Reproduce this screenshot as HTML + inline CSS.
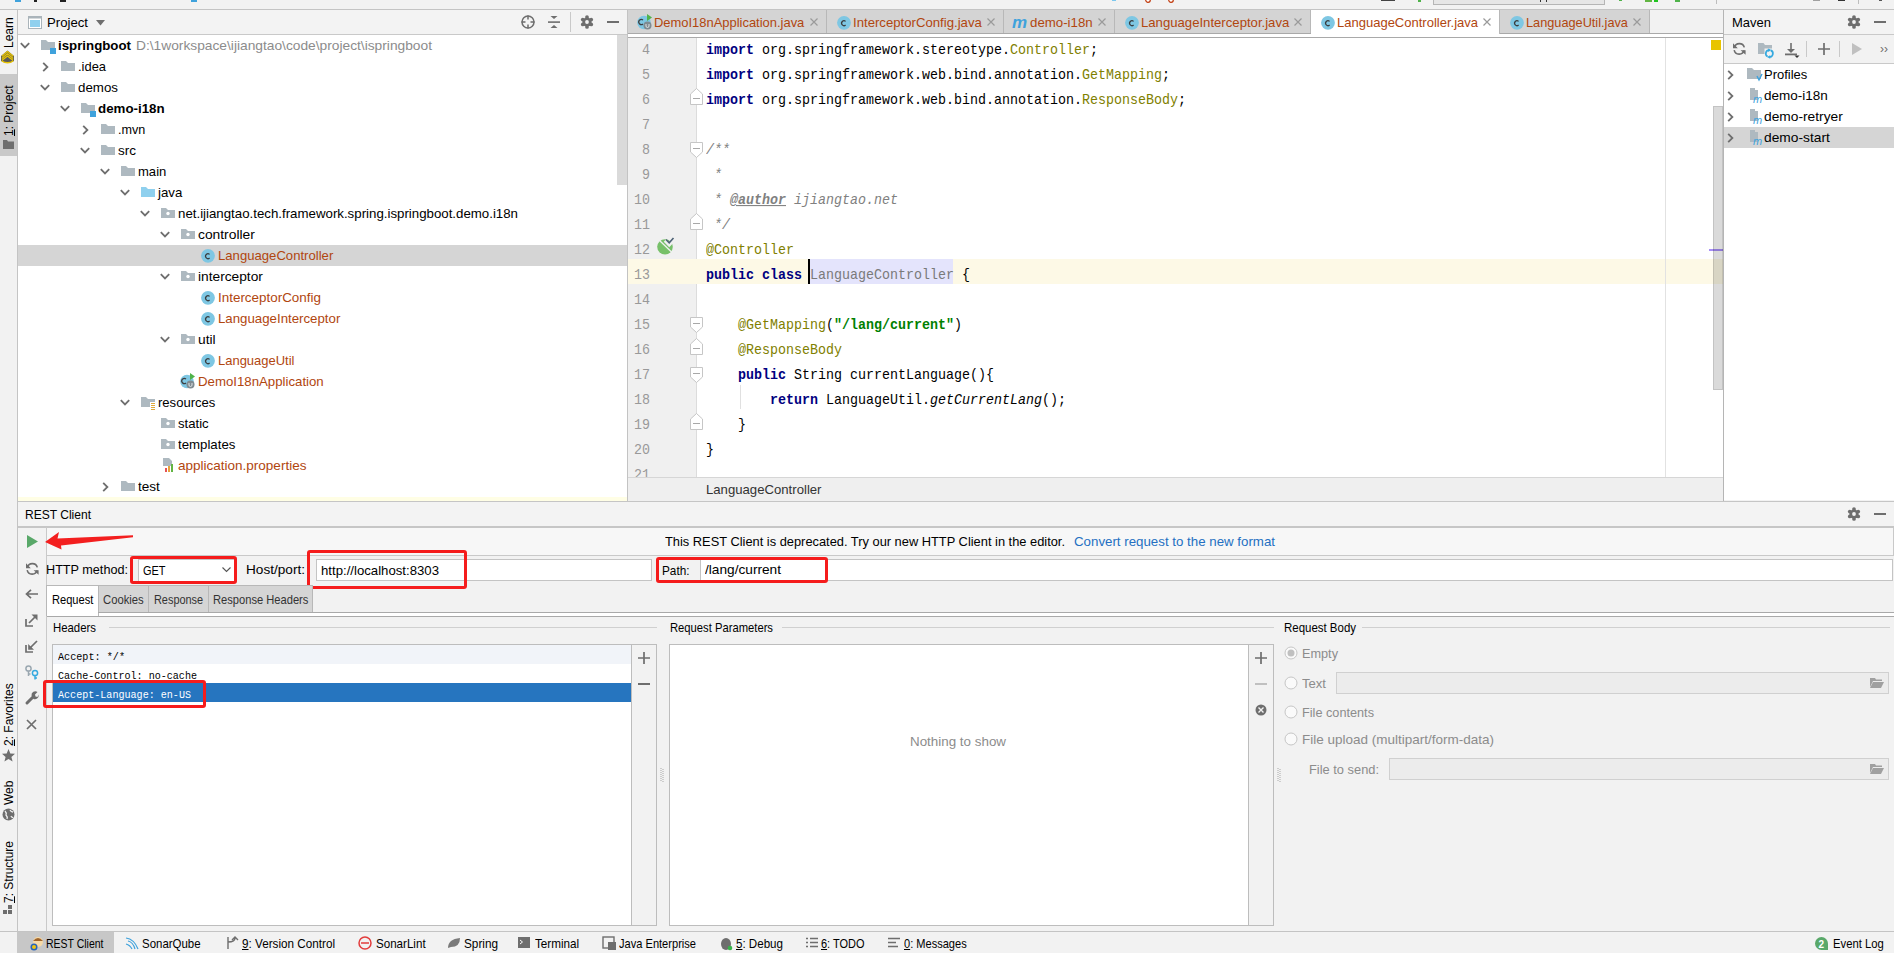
<!DOCTYPE html><html><head><meta charset="utf-8"><style>
html,body{margin:0;padding:0;}body{width:1894px;height:953px;overflow:hidden;position:relative;background:#f2f2f2;font-family:"Liberation Sans",sans-serif;font-size:13px;color:#000;}
div{box-sizing:border-box;}
svg{position:absolute;overflow:visible;pointer-events:none}
.t{position:absolute;white-space:pre;line-height:16px;}
.code{position:absolute;white-space:pre;font-family:"Liberation Mono",monospace;font-size:13.333px;line-height:16px;transform-origin:0 11.56px;transform:scaleY(1.08);}
.kw{color:#000080;font-weight:bold}.an{color:#808000}.st{color:#008000;font-weight:bold}.cm{color:#808080;font-style:italic}
.red{color:#b1460f}
.vt{position:absolute;white-space:pre;line-height:16px;transform-origin:0 0;transform:rotate(-90deg);}
</style></head><body>
<div style="position:absolute;left:0px;top:9px;width:1894px;height:1px;background:#c4c4c4"></div>
<div style="position:absolute;left:15px;top:0px;width:6px;height:2px;background:#3fa2dc"></div>
<div style="position:absolute;left:34px;top:0px;width:3px;height:2px;background:#222"></div>
<div style="position:absolute;left:60px;top:0px;width:6px;height:2px;background:#222"></div>
<div style="position:absolute;left:191px;top:0px;width:6px;height:2px;background:#3fa2dc"></div>
<div style="position:absolute;left:1112px;top:0px;width:4px;height:1px;background:#7cc8ee"></div>
<div style="position:absolute;left:1381px;top:0px;width:14px;height:1px;background:#444"></div>
<div style="position:absolute;left:1418px;top:0px;width:3px;height:2px;background:#4fb34a"></div>
<div style="position:absolute;left:1619px;top:0px;width:3px;height:1px;background:#4fb34a"></div>
<div style="position:absolute;left:1645px;top:0px;width:7px;height:2px;background:#62b543"></div>
<div style="position:absolute;left:1654px;top:0px;width:4px;height:2px;background:#1fc41f"></div>
<div style="position:absolute;left:1675px;top:0px;width:5px;height:2px;background:#4fb34a"></div>
<div style="position:absolute;left:1716px;top:0px;width:1px;height:4px;background:#bdbdbd"></div>
<div style="position:absolute;left:1813px;top:0px;width:7px;height:1px;background:#a0a0a0"></div>
<div style="position:absolute;left:1838px;top:0px;width:7px;height:1px;background:#333"></div>
<div style="position:absolute;left:1858px;top:0px;width:1px;height:4px;background:#bdbdbd"></div>
<div style="position:absolute;left:1879px;top:0px;width:3px;height:1px;background:#555"></div>
<svg style="left:1145px;top:-3px" width="6" height="6" viewBox="0 0 6 6"><circle cx="3" cy="3" r="2.3" fill="#fff" stroke="#c0390b" stroke-width="1.2"/></svg>
<svg style="left:1168px;top:-3px" width="6" height="6" viewBox="0 0 6 6"><circle cx="3" cy="3" r="2.3" fill="#fff" stroke="#c0390b" stroke-width="1.2"/></svg>
<div style="position:absolute;left:1433px;top:-1px;width:172px;height:6px;background:#e6e6e6;border:1px solid #b5b5b5"></div>
<div style="position:absolute;left:1540px;top:0px;width:1px;height:2px;background:#333"></div>
<div style="position:absolute;left:1546px;top:0px;width:1px;height:2px;background:#333"></div>
<div style="position:absolute;left:17px;top:10px;width:1px;height:921px;background:#c4c4c4"></div>
<div class="vt" style="left:1px;top:48px;font-size:12px;">Learn</div>
<svg style="left:1px;top:50px" width="13" height="14" viewBox="0 0 13 14"><path d="M0 6 L6.5 0.5 L13 6 V11 Q6.5 15 0 11 Z" fill="#5a5a5a"/><path d="M0.8 6.2 L6.5 1.5 L12.2 6.2 M0.8 8.4 L6.5 3.8 L12.2 8.4 M0.8 10.6 L6.5 6 L12.2 10.6" stroke="#e8c400" stroke-width="1.3" fill="none"/><path d="M0.8 11 Q6.5 14.5 12.2 11" stroke="#e8c400" stroke-width="1.3" fill="none"/></svg>
<div style="position:absolute;left:0px;top:74px;width:17px;height:82px;background:#c9c9c9"></div>
<div class="vt" style="left:1px;top:136px;font-size:12px;"><u>1</u>: Project</div>
<svg style="left:3px;top:139px" width="11" height="10" viewBox="0 0 11 10"><path d="M0 1 H4 L5 2.5 H11 V10 H0 Z" fill="#6e6e6e"/></svg>
<div class="vt" style="left:1px;top:746px;font-size:12px;"><u>2</u>: Favorites</div>
<svg style="left:2px;top:749px" width="13" height="13" viewBox="0 0 13 13"><path d="M6.5 0 L8.3 4.6 L13 4.8 L9.4 7.9 L10.6 12.6 L6.5 10 L2.4 12.6 L3.6 7.9 L0 4.8 L4.7 4.6 Z" fill="#6e6e6e"/></svg>
<div class="vt" style="left:1px;top:805px;font-size:12px;">Web</div>
<svg style="left:2px;top:808px" width="13" height="13" viewBox="0 0 13 13"><circle cx="6.5" cy="6.5" r="6" fill="#6e6e6e"/><path d="M3 3 Q5 5 4 7 Q6 9 5 11 M8 2 Q9 4 11 4 M9 8 Q10 10 11 9" stroke="#f2f2f2" stroke-width="1.3" fill="none"/></svg>
<div class="vt" style="left:1px;top:903px;font-size:12px;"><u>7</u>: Structure</div>
<svg style="left:3px;top:905px" width="10" height="10" viewBox="0 0 10 10"><rect x="5" y="0" width="4" height="4" fill="#6e6e6e"/><rect x="0" y="5" width="4" height="4" fill="#6e6e6e"/><rect x="5" y="5" width="4" height="4" fill="#6e6e6e"/></svg>
<div style="position:absolute;left:18px;top:10px;width:609px;height:24px;background:#f3f3f3"></div>
<div style="position:absolute;left:18px;top:34px;width:609px;height:1px;background:#c9c9c9"></div>
<svg style="left:28px;top:16px" width="14" height="13" viewBox="0 0 14 13"><rect x="0.5" y="0.5" width="13" height="12" fill="#fff" stroke="#aab4ba"/><rect x="0" y="0" width="14" height="2.5" fill="#aab4ba"/><rect x="2" y="4" width="10" height="7" fill="#8fd0ee"/></svg>
<div class="t" style="left:47px;top:15px;transform-origin:0 0;transform:scaleX(1.0131);">Project</div>
<svg style="left:96px;top:20px" width="9" height="6" viewBox="0 0 9 6"><path d="M0 0 H9 L4.5 5.5 Z" fill="#6e6e6e"/></svg>
<svg style="left:521px;top:15px" width="14" height="14" viewBox="0 0 14 14"><circle cx="7" cy="7" r="6" fill="none" stroke="#6e6e6e" stroke-width="1.5"/><path d="M7 0.5 V4.5 M7 9.5 V13.5 M0.5 7 H4.5 M9.5 7 H13.5" stroke="#6e6e6e" stroke-width="1.5"/></svg>
<svg style="left:548px;top:15px" width="12" height="14" viewBox="0 0 12 14"><path d="M2.5 1 H9.5 L6 4 Z M2.5 13 H9.5 L6 10 Z" fill="#6e6e6e"/><rect x="0" y="6.3" width="12" height="1.6" fill="#6e6e6e"/></svg>
<div style="position:absolute;left:570px;top:12px;width:1px;height:20px;background:#c9c9c9"></div>
<svg style="left:0;top:0" width="1894" height="953"><circle cx="587" cy="22" r="4.6" fill="#6e6e6e"/><circle cx="587.00" cy="17.10" r="1.85" fill="#6e6e6e"/><circle cx="591.24" cy="19.55" r="1.85" fill="#6e6e6e"/><circle cx="591.24" cy="24.45" r="1.85" fill="#6e6e6e"/><circle cx="587.00" cy="26.90" r="1.85" fill="#6e6e6e"/><circle cx="582.76" cy="24.45" r="1.85" fill="#6e6e6e"/><circle cx="582.76" cy="19.55" r="1.85" fill="#6e6e6e"/><circle cx="587" cy="22" r="1.9" fill="#f3f3f3"/></svg>
<div style="position:absolute;left:607px;top:21px;width:12px;height:2px;background:#6e6e6e"></div>
<div style="position:absolute;left:18px;top:35px;width:609px;height:465px;background:#fff"></div>
<div style="position:absolute;left:18px;top:245px;width:609px;height:21px;background:#d5d5d5"></div>
<div style="position:absolute;left:617px;top:35px;width:10px;height:150px;background:#dadada"></div>
<svg style="left:20px;top:42px" width="10" height="8" viewBox="0 0 10 8"><path d="M0.8 1.2 L5 5.4 L9.2 1.2" fill="none" stroke="#6e6e6e" stroke-width="1.8"/></svg>
<svg style="left:40px;top:37px" width="16" height="16" viewBox="0 0 16 16"><path d="M1 3 H6 L8 5 H15 V13 H1 Z" fill="#aeb9c0"/><rect x="10" y="11" width="6" height="6" fill="#3fa2dc"/></svg>
<div class="t" style="left:58px;top:38px;transform-origin:0 0;transform:scaleX(1.0210);"><b>ispringboot</b></div>
<svg style="left:42px;top:62px" width="8" height="10" viewBox="0 0 8 10"><path d="M1.2 0.8 L5.4 5 L1.2 9.2" fill="none" stroke="#6e6e6e" stroke-width="1.8"/></svg>
<svg style="left:60px;top:58px" width="16" height="16" viewBox="0 0 16 16"><path d="M1 3 H6 L8 5 H15 V13 H1 Z" fill="#aeb9c0"/></svg>
<div class="t" style="left:78px;top:59px;transform-origin:0 0;transform:scaleX(0.9928);">.idea</div>
<svg style="left:40px;top:84px" width="10" height="8" viewBox="0 0 10 8"><path d="M0.8 1.2 L5 5.4 L9.2 1.2" fill="none" stroke="#6e6e6e" stroke-width="1.8"/></svg>
<svg style="left:60px;top:79px" width="16" height="16" viewBox="0 0 16 16"><path d="M1 3 H6 L8 5 H15 V13 H1 Z" fill="#aeb9c0"/></svg>
<div class="t" style="left:78px;top:80px;transform-origin:0 0;transform:scaleX(1.0248);">demos</div>
<svg style="left:60px;top:105px" width="10" height="8" viewBox="0 0 10 8"><path d="M0.8 1.2 L5 5.4 L9.2 1.2" fill="none" stroke="#6e6e6e" stroke-width="1.8"/></svg>
<svg style="left:80px;top:100px" width="16" height="16" viewBox="0 0 16 16"><path d="M1 3 H6 L8 5 H15 V13 H1 Z" fill="#aeb9c0"/><rect x="10" y="11" width="6" height="6" fill="#3fa2dc"/></svg>
<div class="t" style="left:98px;top:101px;transform-origin:0 0;transform:scaleX(1.0244);"><b>demo-i18n</b></div>
<svg style="left:82px;top:125px" width="8" height="10" viewBox="0 0 8 10"><path d="M1.2 0.8 L5.4 5 L1.2 9.2" fill="none" stroke="#6e6e6e" stroke-width="1.8"/></svg>
<svg style="left:100px;top:121px" width="16" height="16" viewBox="0 0 16 16"><path d="M1 3 H6 L8 5 H15 V13 H1 Z" fill="#aeb9c0"/></svg>
<div class="t" style="left:118px;top:122px;transform-origin:0 0;transform:scaleX(0.9691);">.mvn</div>
<svg style="left:80px;top:147px" width="10" height="8" viewBox="0 0 10 8"><path d="M0.8 1.2 L5 5.4 L9.2 1.2" fill="none" stroke="#6e6e6e" stroke-width="1.8"/></svg>
<svg style="left:100px;top:142px" width="16" height="16" viewBox="0 0 16 16"><path d="M1 3 H6 L8 5 H15 V13 H1 Z" fill="#aeb9c0"/></svg>
<div class="t" style="left:118px;top:143px;transform-origin:0 0;transform:scaleX(1.0378);">src</div>
<svg style="left:100px;top:168px" width="10" height="8" viewBox="0 0 10 8"><path d="M0.8 1.2 L5 5.4 L9.2 1.2" fill="none" stroke="#6e6e6e" stroke-width="1.8"/></svg>
<svg style="left:120px;top:163px" width="16" height="16" viewBox="0 0 16 16"><path d="M1 3 H6 L8 5 H15 V13 H1 Z" fill="#aeb9c0"/></svg>
<div class="t" style="left:138px;top:164px;transform-origin:0 0;transform:scaleX(1.0040);">main</div>
<svg style="left:120px;top:189px" width="10" height="8" viewBox="0 0 10 8"><path d="M0.8 1.2 L5 5.4 L9.2 1.2" fill="none" stroke="#6e6e6e" stroke-width="1.8"/></svg>
<svg style="left:140px;top:184px" width="16" height="16" viewBox="0 0 16 16"><path d="M1 3 H6 L8 5 H15 V13 H1 Z" fill="#8fd0ee"/></svg>
<div class="t" style="left:158px;top:185px;transform-origin:0 0;transform:scaleX(1.0185);">java</div>
<svg style="left:140px;top:210px" width="10" height="8" viewBox="0 0 10 8"><path d="M0.8 1.2 L5 5.4 L9.2 1.2" fill="none" stroke="#6e6e6e" stroke-width="1.8"/></svg>
<svg style="left:160px;top:205px" width="16" height="16" viewBox="0 0 16 16"><path d="M1 3 H6 L8 5 H15 V13 H1 Z" fill="#aeb9c0"/><circle cx="8" cy="8.5" r="1.7" fill="#fff"/></svg>
<div class="t" style="left:178px;top:206px;transform-origin:0 0;transform:scaleX(1.0206);">net.ijiangtao.tech.framework.spring.ispringboot.demo.i18n</div>
<svg style="left:160px;top:231px" width="10" height="8" viewBox="0 0 10 8"><path d="M0.8 1.2 L5 5.4 L9.2 1.2" fill="none" stroke="#6e6e6e" stroke-width="1.8"/></svg>
<svg style="left:180px;top:226px" width="16" height="16" viewBox="0 0 16 16"><path d="M1 3 H6 L8 5 H15 V13 H1 Z" fill="#aeb9c0"/><circle cx="8" cy="8.5" r="1.7" fill="#fff"/></svg>
<div class="t" style="left:198px;top:227px;transform-origin:0 0;transform:scaleX(1.0623);">controller</div>
<svg style="left:200px;top:247px" width="16" height="16" viewBox="0 0 16 16"><circle cx="8" cy="8.8" r="6.9" fill="#7ec7e3"/><path d="M9.6 7.4 A2.4 2.4 0 1 0 9.6 11" fill="none" stroke="#3a3d3f" stroke-width="1.25"/></svg>
<div class="t" style="left:218px;top:248px;transform-origin:0 0;transform:scaleX(1.0096);"><span class="red">LanguageController</span></div>
<svg style="left:160px;top:273px" width="10" height="8" viewBox="0 0 10 8"><path d="M0.8 1.2 L5 5.4 L9.2 1.2" fill="none" stroke="#6e6e6e" stroke-width="1.8"/></svg>
<svg style="left:180px;top:268px" width="16" height="16" viewBox="0 0 16 16"><path d="M1 3 H6 L8 5 H15 V13 H1 Z" fill="#aeb9c0"/><circle cx="8" cy="8.5" r="1.7" fill="#fff"/></svg>
<div class="t" style="left:198px;top:269px;transform-origin:0 0;transform:scaleX(1.0566);">interceptor</div>
<svg style="left:200px;top:289px" width="16" height="16" viewBox="0 0 16 16"><circle cx="8" cy="8.8" r="6.9" fill="#7ec7e3"/><path d="M9.6 7.4 A2.4 2.4 0 1 0 9.6 11" fill="none" stroke="#3a3d3f" stroke-width="1.25"/></svg>
<div class="t" style="left:218px;top:290px;transform-origin:0 0;transform:scaleX(1.0327);"><span class="red">InterceptorConfig</span></div>
<svg style="left:200px;top:310px" width="16" height="16" viewBox="0 0 16 16"><circle cx="8" cy="8.8" r="6.9" fill="#7ec7e3"/><path d="M9.6 7.4 A2.4 2.4 0 1 0 9.6 11" fill="none" stroke="#3a3d3f" stroke-width="1.25"/></svg>
<div class="t" style="left:218px;top:311px;transform-origin:0 0;transform:scaleX(1.0193);"><span class="red">LanguageInterceptor</span></div>
<svg style="left:160px;top:336px" width="10" height="8" viewBox="0 0 10 8"><path d="M0.8 1.2 L5 5.4 L9.2 1.2" fill="none" stroke="#6e6e6e" stroke-width="1.8"/></svg>
<svg style="left:180px;top:331px" width="16" height="16" viewBox="0 0 16 16"><path d="M1 3 H6 L8 5 H15 V13 H1 Z" fill="#aeb9c0"/><circle cx="8" cy="8.5" r="1.7" fill="#fff"/></svg>
<div class="t" style="left:198px;top:332px;transform-origin:0 0;transform:scaleX(1.0586);">util</div>
<svg style="left:200px;top:352px" width="16" height="16" viewBox="0 0 16 16"><circle cx="8" cy="8.8" r="6.9" fill="#7ec7e3"/><path d="M9.6 7.4 A2.4 2.4 0 1 0 9.6 11" fill="none" stroke="#3a3d3f" stroke-width="1.25"/></svg>
<div class="t" style="left:218px;top:353px;transform-origin:0 0;transform:scaleX(0.9971);"><span class="red">LanguageUtil</span></div>
<svg style="left:180px;top:373px" width="16" height="16" viewBox="0 0 16 16"><circle cx="7" cy="8.5" r="6.8" fill="#7ec7e3"/><path d="M6 6 A2.6 2.6 0 1 0 6 10" fill="none" stroke="#3c3f41" stroke-width="1.2"/><path d="M10 0 L15 3.5 L10 7 Z" fill="#4fb34a"/><circle cx="10.5" cy="11.5" r="4" fill="#7f8b91"/><path d="M9 10 V12 A1.5 1.5 0 0 0 12 12 V10" fill="none" stroke="#dfe3e5" stroke-width="1"/></svg>
<div class="t" style="left:198px;top:374px;transform-origin:0 0;transform:scaleX(1.0172);"><span class="red">DemoI18nApplication</span></div>
<svg style="left:120px;top:399px" width="10" height="8" viewBox="0 0 10 8"><path d="M0.8 1.2 L5 5.4 L9.2 1.2" fill="none" stroke="#6e6e6e" stroke-width="1.8"/></svg>
<svg style="left:140px;top:394px" width="16" height="16" viewBox="0 0 16 16"><path d="M1 3 H6 L8 5 H15 V13 H1 Z" fill="#aeb9c0"/><rect x="10" y="8" width="6" height="8" fill="#fff"/><path d="M11 9.5H15M11 11.5H15M11 13.5H15M11 15.5H15" stroke="#e0a93a" stroke-width="1"/></svg>
<div class="t" style="left:158px;top:395px;transform-origin:0 0;transform:scaleX(1.0056);">resources</div>
<svg style="left:160px;top:415px" width="16" height="16" viewBox="0 0 16 16"><path d="M1 3 H6 L8 5 H15 V13 H1 Z" fill="#aeb9c0"/><circle cx="8" cy="8.5" r="1.7" fill="#fff"/></svg>
<div class="t" style="left:178px;top:416px;transform-origin:0 0;transform:scaleX(1.0117);">static</div>
<svg style="left:160px;top:436px" width="16" height="16" viewBox="0 0 16 16"><path d="M1 3 H6 L8 5 H15 V13 H1 Z" fill="#aeb9c0"/><circle cx="8" cy="8.5" r="1.7" fill="#fff"/></svg>
<div class="t" style="left:178px;top:437px;transform-origin:0 0;transform:scaleX(1.0182);">templates</div>
<svg style="left:160px;top:457px" width="16" height="16" viewBox="0 0 16 16"><path d="M3 1 H9 L12 4 V9 H3 Z" fill="#aeb9c0"/><rect x="8" y="9" width="2" height="6" fill="#e8a33d"/><rect x="11" y="7" width="2" height="8" fill="#62b543"/><rect x="5" y="11" width="2" height="4" fill="#e55353"/></svg>
<div class="t" style="left:178px;top:458px;transform-origin:0 0;transform:scaleX(1.0390);"><span class="red">application.properties</span></div>
<svg style="left:102px;top:482px" width="8" height="10" viewBox="0 0 8 10"><path d="M1.2 0.8 L5.4 5 L1.2 9.2" fill="none" stroke="#6e6e6e" stroke-width="1.8"/></svg>
<svg style="left:120px;top:478px" width="16" height="16" viewBox="0 0 16 16"><path d="M1 3 H6 L8 5 H15 V13 H1 Z" fill="#aeb9c0"/></svg>
<div class="t" style="left:138px;top:479px;transform-origin:0 0;transform:scaleX(1.0444);">test</div>
<div class="t" style="left:136px;top:38px;transform-origin:0 0;transform:scaleX(1.0584);color:#8c8c8c">D:\1workspace\ijiangtao\code\project\ispringboot</div>
<div style="position:absolute;left:628px;top:10px;width:1095px;height:24px;background:#f2f2f2"></div>
<div style="position:absolute;left:628px;top:10px;width:199px;height:24px;background:#d4d4d4;border-right:1px solid #b8b8b8"></div>
<svg style="left:637px;top:14px" width="16" height="16" viewBox="0 0 16 16"><circle cx="7" cy="8.5" r="6.8" fill="#7ec7e3"/><path d="M6 6 A2.6 2.6 0 1 0 6 10" fill="none" stroke="#3c3f41" stroke-width="1.2"/><path d="M10 0 L15 3.5 L10 7 Z" fill="#4fb34a"/><circle cx="10.5" cy="11.5" r="4" fill="#7f8b91"/><path d="M9 10 V12 A1.5 1.5 0 0 0 12 12 V10" fill="none" stroke="#dfe3e5" stroke-width="1"/></svg>
<div class="t" style="left:654px;top:15px;transform-origin:0 0;transform:scaleX(0.9951);color:#b1460f">DemoI18nApplication.java</div>
<svg style="left:810px;top:18px" width="8" height="8" viewBox="0 0 8 8"><path d="M0.5 0.5 L7.5 7.5 M7.5 0.5 L0.5 7.5" stroke="#9a9a9a" stroke-width="1.2"/></svg>
<div style="position:absolute;left:827px;top:10px;width:177px;height:24px;background:#d4d4d4;border-right:1px solid #b8b8b8"></div>
<svg style="left:836px;top:14px" width="16" height="16" viewBox="0 0 16 16"><circle cx="8" cy="8.8" r="6.9" fill="#7ec7e3"/><path d="M9.6 7.4 A2.4 2.4 0 1 0 9.6 11" fill="none" stroke="#3a3d3f" stroke-width="1.25"/></svg>
<div class="t" style="left:853px;top:15px;transform-origin:0 0;transform:scaleX(1.0127);color:#b1460f">InterceptorConfig.java</div>
<svg style="left:987px;top:18px" width="8" height="8" viewBox="0 0 8 8"><path d="M0.5 0.5 L7.5 7.5 M7.5 0.5 L0.5 7.5" stroke="#9a9a9a" stroke-width="1.2"/></svg>
<div style="position:absolute;left:1004px;top:10px;width:111px;height:24px;background:#d4d4d4;border-right:1px solid #b8b8b8"></div>
<div class="t" style="left:1012px;top:15px;"><i style="font-size:17px;color:#3fa2dc;font-weight:bold">m</i></div>
<div class="t" style="left:1030px;top:15px;transform-origin:0 0;transform:scaleX(1.0205);color:#b1460f">demo-i18n</div>
<svg style="left:1098px;top:18px" width="8" height="8" viewBox="0 0 8 8"><path d="M0.5 0.5 L7.5 7.5 M7.5 0.5 L0.5 7.5" stroke="#9a9a9a" stroke-width="1.2"/></svg>
<div style="position:absolute;left:1115px;top:10px;width:196px;height:24px;background:#d4d4d4;border-right:1px solid #b8b8b8"></div>
<svg style="left:1124px;top:14px" width="16" height="16" viewBox="0 0 16 16"><circle cx="8" cy="8.8" r="6.9" fill="#7ec7e3"/><path d="M9.6 7.4 A2.4 2.4 0 1 0 9.6 11" fill="none" stroke="#3a3d3f" stroke-width="1.25"/></svg>
<div class="t" style="left:1141px;top:15px;transform-origin:0 0;transform:scaleX(1.0107);color:#b1460f">LanguageInterceptor.java</div>
<svg style="left:1294px;top:18px" width="8" height="8" viewBox="0 0 8 8"><path d="M0.5 0.5 L7.5 7.5 M7.5 0.5 L0.5 7.5" stroke="#9a9a9a" stroke-width="1.2"/></svg>
<div style="position:absolute;left:1311px;top:10px;width:189px;height:24px;background:#fff;border-right:1px solid #b8b8b8"></div>
<svg style="left:1320px;top:14px" width="16" height="16" viewBox="0 0 16 16"><circle cx="8" cy="8.8" r="6.9" fill="#7ec7e3"/><path d="M9.6 7.4 A2.4 2.4 0 1 0 9.6 11" fill="none" stroke="#3a3d3f" stroke-width="1.25"/></svg>
<div class="t" style="left:1337px;top:15px;transform-origin:0 0;transform:scaleX(1.0004);color:#b1460f">LanguageController.java</div>
<svg style="left:1483px;top:18px" width="8" height="8" viewBox="0 0 8 8"><path d="M0.5 0.5 L7.5 7.5 M7.5 0.5 L0.5 7.5" stroke="#9a9a9a" stroke-width="1.2"/></svg>
<div style="position:absolute;left:1500px;top:10px;width:150px;height:24px;background:#d4d4d4;border-right:1px solid #b8b8b8"></div>
<svg style="left:1509px;top:14px" width="16" height="16" viewBox="0 0 16 16"><circle cx="8" cy="8.8" r="6.9" fill="#7ec7e3"/><path d="M9.6 7.4 A2.4 2.4 0 1 0 9.6 11" fill="none" stroke="#3a3d3f" stroke-width="1.25"/></svg>
<div class="t" style="left:1526px;top:15px;transform-origin:0 0;transform:scaleX(0.9791);color:#b1460f">LanguageUtil.java</div>
<svg style="left:1633px;top:18px" width="8" height="8" viewBox="0 0 8 8"><path d="M0.5 0.5 L7.5 7.5 M7.5 0.5 L0.5 7.5" stroke="#9a9a9a" stroke-width="1.2"/></svg>
<div style="position:absolute;left:628px;top:33px;width:683px;height:1px;background:#a9a9a9"></div>
<div style="position:absolute;left:1500px;top:33px;width:223px;height:1px;background:#a9a9a9"></div>
<div style="position:absolute;left:628px;top:34px;width:1095px;height:3px;background:#fff"></div>
<div style="position:absolute;left:628px;top:37px;width:1095px;height:1px;background:#a9a9a9"></div>
<div style="position:absolute;left:628px;top:38px;width:1095px;height:440px;background:#fff"></div>
<div style="position:absolute;left:628px;top:38px;width:68px;height:440px;background:#f0f0f0"></div>
<div style="position:absolute;left:696px;top:38px;width:1px;height:440px;background:#dcdcdc"></div>
<div style="position:absolute;left:628px;top:259px;width:1095px;height:25px;background:#fdf9e6"></div>
<div style="position:absolute;left:810px;top:259px;width:143px;height:25px;background:#e4e4fc"></div>
<div style="position:absolute;left:808px;top:259px;width:2px;height:25px;background:#000"></div>
<div style="position:absolute;left:1665px;top:38px;width:1px;height:440px;background:#e2e2e2"></div>
<div style="position:absolute;left:1711px;top:40px;width:10px;height:10px;background:#e8c400"></div>
<div style="position:absolute;left:1709px;top:249px;width:14px;height:2px;background:#a78ef7"></div>
<div style="position:absolute;left:1713px;top:106px;width:10px;height:284px;background:rgba(0,0,0,0.145);border:1px solid rgba(0,0,0,0.1)"></div>
<div class="code" style="left:628px;top:43px;width:22px;text-align:right;color:#999">4</div>
<div class="code" style="left:706px;top:43px;"><span class="kw">import</span> org.springframework.stereotype.<span class="an">Controller</span>;</div>
<div class="code" style="left:628px;top:68px;width:22px;text-align:right;color:#999">5</div>
<div class="code" style="left:706px;top:68px;"><span class="kw">import</span> org.springframework.web.bind.annotation.<span class="an">GetMapping</span>;</div>
<div class="code" style="left:628px;top:93px;width:22px;text-align:right;color:#999">6</div>
<div class="code" style="left:706px;top:93px;"><span class="kw">import</span> org.springframework.web.bind.annotation.<span class="an">ResponseBody</span>;</div>
<div class="code" style="left:628px;top:118px;width:22px;text-align:right;color:#999">7</div>
<div class="code" style="left:628px;top:143px;width:22px;text-align:right;color:#999">8</div>
<div class="code" style="left:706px;top:143px;"><span class="cm">/**</span></div>
<div class="code" style="left:628px;top:168px;width:22px;text-align:right;color:#999">9</div>
<div class="code" style="left:706px;top:168px;"><span class="cm"> *</span></div>
<div class="code" style="left:628px;top:193px;width:22px;text-align:right;color:#999">10</div>
<div class="code" style="left:706px;top:193px;"><span class="cm"> * <b style="text-decoration:underline">@author</b> ijiangtao.net</span></div>
<div class="code" style="left:628px;top:218px;width:22px;text-align:right;color:#999">11</div>
<div class="code" style="left:706px;top:218px;"><span class="cm"> */</span></div>
<div class="code" style="left:628px;top:243px;width:22px;text-align:right;color:#999">12</div>
<div class="code" style="left:706px;top:243px;"><span class="an">@Controller</span></div>
<div class="code" style="left:628px;top:268px;width:22px;text-align:right;color:#999">13</div>
<div class="code" style="left:706px;top:268px;"><span class="kw">public class</span> <span style="color:#7a7a7a">LanguageController</span> {</div>
<div class="code" style="left:628px;top:293px;width:22px;text-align:right;color:#999">14</div>
<div class="code" style="left:628px;top:318px;width:22px;text-align:right;color:#999">15</div>
<div class="code" style="left:706px;top:318px;">    <span class="an">@GetMapping</span>(<span class="st">"/lang/current"</span>)</div>
<div class="code" style="left:628px;top:343px;width:22px;text-align:right;color:#999">16</div>
<div class="code" style="left:706px;top:343px;">    <span class="an">@ResponseBody</span></div>
<div class="code" style="left:628px;top:368px;width:22px;text-align:right;color:#999">17</div>
<div class="code" style="left:706px;top:368px;">    <span class="kw">public</span> String currentLanguage(){</div>
<div class="code" style="left:628px;top:393px;width:22px;text-align:right;color:#999">18</div>
<div class="code" style="left:706px;top:393px;">        <span class="kw">return</span> LanguageUtil.<i>getCurrentLang</i>();</div>
<div class="code" style="left:628px;top:418px;width:22px;text-align:right;color:#999">19</div>
<div class="code" style="left:706px;top:418px;">    }</div>
<div class="code" style="left:628px;top:443px;width:22px;text-align:right;color:#999">20</div>
<div class="code" style="left:706px;top:443px;">}</div>
<div class="code" style="left:628px;top:468px;width:22px;text-align:right;color:#999">21</div>
<svg style="left:690px;top:88px" width="13" height="17" viewBox="0 0 13 17"><path d="M0.5 16.5 H12.5 V6 L6.5 0.5 L0.5 6 Z" fill="#fff" stroke="#c6c6c6"/><path d="M3 10.5 H10" stroke="#a8a8a8"/></svg>
<svg style="left:690px;top:141px" width="13" height="17" viewBox="0 0 13 17"><path d="M0.5 1.5 H12.5 V11 L6.5 16.5 L0.5 11 Z" fill="#fff" stroke="#c6c6c6"/><path d="M3 7.5 H10" stroke="#a8a8a8"/></svg>
<svg style="left:690px;top:213px" width="13" height="17" viewBox="0 0 13 17"><path d="M0.5 16.5 H12.5 V6 L6.5 0.5 L0.5 6 Z" fill="#fff" stroke="#c6c6c6"/><path d="M3 10.5 H10" stroke="#a8a8a8"/></svg>
<svg style="left:690px;top:316px" width="13" height="17" viewBox="0 0 13 17"><path d="M0.5 1.5 H12.5 V11 L6.5 16.5 L0.5 11 Z" fill="#fff" stroke="#c6c6c6"/><path d="M3 7.5 H10" stroke="#a8a8a8"/></svg>
<svg style="left:690px;top:338px" width="13" height="17" viewBox="0 0 13 17"><path d="M0.5 16.5 H12.5 V6 L6.5 0.5 L0.5 6 Z" fill="#fff" stroke="#c6c6c6"/><path d="M3 10.5 H10" stroke="#a8a8a8"/></svg>
<svg style="left:690px;top:366px" width="13" height="17" viewBox="0 0 13 17"><path d="M0.5 1.5 H12.5 V11 L6.5 16.5 L0.5 11 Z" fill="#fff" stroke="#c6c6c6"/><path d="M3 7.5 H10" stroke="#a8a8a8"/></svg>
<svg style="left:690px;top:413px" width="13" height="17" viewBox="0 0 13 17"><path d="M0.5 16.5 H12.5 V6 L6.5 0.5 L0.5 6 Z" fill="#fff" stroke="#c6c6c6"/><path d="M3 10.5 H10" stroke="#a8a8a8"/></svg>
<div style="position:absolute;left:740px;top:385px;width:1px;height:24px;background:#e0e0e0"></div>
<svg style="left:657px;top:237px" width="19" height="18" viewBox="0 0 19 18"><ellipse cx="8" cy="9.8" rx="7.8" ry="7.6" fill="#77c069"/><path d="M1.5 2.5 L14.5 15" stroke="#f0f0f0" stroke-width="1.3"/><path d="M8 3.5 L12.2 7.6 L17.5 2" stroke="#f0f0f0" stroke-width="3.6" fill="none"/><path d="M9 2.5 L12.2 5.8 L16.5 1" stroke="#4d6275" stroke-width="1.6" fill="none"/></svg>
<div style="position:absolute;left:628px;top:477px;width:1095px;height:24px;background:#efefef;border-top:1px solid #d6d6d6"></div>
<div class="t" style="left:706px;top:482px;transform-origin:0 0;transform:scaleX(1.0114);color:#333">LanguageController</div>
<div style="position:absolute;left:1723px;top:10px;width:1px;height:491px;background:#b5b5b5"></div>
<div style="position:absolute;left:627px;top:10px;width:1px;height:491px;background:#c3c3c3"></div>
<div style="position:absolute;left:1724px;top:10px;width:170px;height:24px;background:#f3f3f3"></div>
<div class="t" style="left:1732px;top:15px;transform-origin:0 0;transform:scaleX(0.9992);">Maven</div>
<svg style="left:0;top:0" width="1894" height="953"><circle cx="1854" cy="22" r="4.6" fill="#6e6e6e"/><circle cx="1854.00" cy="17.10" r="1.85" fill="#6e6e6e"/><circle cx="1858.24" cy="19.55" r="1.85" fill="#6e6e6e"/><circle cx="1858.24" cy="24.45" r="1.85" fill="#6e6e6e"/><circle cx="1854.00" cy="26.90" r="1.85" fill="#6e6e6e"/><circle cx="1849.76" cy="24.45" r="1.85" fill="#6e6e6e"/><circle cx="1849.76" cy="19.55" r="1.85" fill="#6e6e6e"/><circle cx="1854" cy="22" r="1.9" fill="#f3f3f3"/></svg>
<div style="position:absolute;left:1874px;top:21px;width:12px;height:2px;background:#6e6e6e"></div>
<div style="position:absolute;left:1724px;top:34px;width:170px;height:1px;background:#c9c9c9"></div>
<div style="position:absolute;left:1724px;top:35px;width:170px;height:28px;background:#f2f2f2"></div>
<div style="position:absolute;left:1724px;top:63px;width:170px;height:1px;background:#c9c9c9"></div>
<svg style="left:1733px;top:42px" width="13" height="13" viewBox="0 0 13 13"><path d="M1.4 5.6 A5.1 5.1 0 0 1 11.3 5.4 M11.1 8.4 A5.1 5.1 0 0 1 1.2 8.1" fill="none" stroke="#6e6e6e" stroke-width="1.6"/><path d="M0 1.2 V6.3 H4.8 Z M7.6 8.2 H12.6 V12.8 Z" fill="#6e6e6e"/></svg>
<svg style="left:1758px;top:43px" width="16" height="16" viewBox="0 0 16 16"><path d="M0 0 H5.5 L7 2 H14 V11 H0 Z" fill="#aeb9c0"/><path d="M6.5 5.5 H16 V16 H6.5 Z" fill="#f2f2f2"/><path d="M11.2 7.2 A3.4 3.4 0 0 0 9.6 13.6 M11 13.9 A3.4 3.4 0 0 0 12.8 7.4" stroke="#36a9df" stroke-width="1.7" fill="none"/><path d="M10.2 5.4 L13.4 7.1 L10.2 8.9 Z M12.2 12.2 L9 13.9 L12.2 15.7 Z" fill="#36a9df"/></svg>
<svg style="left:1785px;top:43px" width="15" height="16" viewBox="0 0 15 16"><path d="M6 0 V8" stroke="#6e6e6e" stroke-width="1.6"/><path d="M2 6 H10 L6 10 Z" fill="#6e6e6e"/><rect x="0" y="10.5" width="12" height="1.8" fill="#6e6e6e"/><path d="M9.5 12.5 H14.5 L12 15 Z" fill="#333"/></svg>
<div style="position:absolute;left:1806px;top:41px;width:1px;height:16px;background:#c9c9c9"></div>
<svg style="left:1818px;top:43px" width="12" height="12" viewBox="0 0 12 12"><path d="M6 0 V12 M0 6 H12" stroke="#6e6e6e" stroke-width="1.7"/></svg>
<div style="position:absolute;left:1839px;top:41px;width:1px;height:16px;background:#c9c9c9"></div>
<svg style="left:1852px;top:43px" width="10" height="12" viewBox="0 0 10 12"><path d="M0 0 L10 6 L0 12 Z" fill="#c0c0c0"/></svg>
<div class="t" style="left:1880px;top:41px;color:#6e6e6e;font-size:12px">››</div>
<div style="position:absolute;left:1724px;top:64px;width:170px;height:436px;background:#fff"></div>
<div style="position:absolute;left:1724px;top:127px;width:170px;height:21px;background:#d5d5d5"></div>
<svg style="left:1727px;top:70px" width="8" height="10" viewBox="0 0 8 10"><path d="M1.2 0.8 L5.4 5 L1.2 9.2" fill="none" stroke="#6e6e6e" stroke-width="1.8"/></svg>
<svg style="left:1747px;top:66px" width="16" height="16" viewBox="0 0 16 16"><path d="M0 2 H5 L7 4 H14 V13 H0 Z" fill="#aeb9c0"/><path d="M10 10 L12 14 L15 8" stroke="#3fa2dc" stroke-width="1.4" fill="none"/></svg>
<div class="t" style="left:1764px;top:67px;transform-origin:0 0;transform:scaleX(0.9986);">Profiles</div>
<svg style="left:1727px;top:91px" width="8" height="10" viewBox="0 0 8 10"><path d="M1.2 0.8 L5.4 5 L1.2 9.2" fill="none" stroke="#6e6e6e" stroke-width="1.8"/></svg>
<svg style="left:1748px;top:87px" width="16" height="16" viewBox="0 0 16 16"><path d="M2 1 H7 V3 H10 V13 H2 Z" fill="#aeb9c0"/><text x="5" y="16" font-size="11" font-style="italic" fill="#3fa2dc" font-family="Liberation Sans">m</text></svg>
<div class="t" style="left:1764px;top:88px;transform-origin:0 0;transform:scaleX(1.0385);">demo-i18n</div>
<svg style="left:1727px;top:112px" width="8" height="10" viewBox="0 0 8 10"><path d="M1.2 0.8 L5.4 5 L1.2 9.2" fill="none" stroke="#6e6e6e" stroke-width="1.8"/></svg>
<svg style="left:1748px;top:108px" width="16" height="16" viewBox="0 0 16 16"><path d="M2 1 H7 V3 H10 V13 H2 Z" fill="#aeb9c0"/><text x="5" y="16" font-size="11" font-style="italic" fill="#3fa2dc" font-family="Liberation Sans">m</text></svg>
<div class="t" style="left:1764px;top:109px;transform-origin:0 0;transform:scaleX(1.0588);">demo-retryer</div>
<svg style="left:1727px;top:133px" width="8" height="10" viewBox="0 0 8 10"><path d="M1.2 0.8 L5.4 5 L1.2 9.2" fill="none" stroke="#6e6e6e" stroke-width="1.8"/></svg>
<svg style="left:1748px;top:129px" width="16" height="16" viewBox="0 0 16 16"><path d="M2 1 H7 V3 H10 V13 H2 Z" fill="#aeb9c0"/><text x="5" y="16" font-size="11" font-style="italic" fill="#3fa2dc" font-family="Liberation Sans">m</text></svg>
<div class="t" style="left:1764px;top:130px;transform-origin:0 0;transform:scaleX(1.0589);">demo-start</div>
<div style="position:absolute;left:18px;top:497px;width:609px;height:4px;background:#fffee5"></div>
<div style="position:absolute;left:18px;top:501px;width:1876px;height:1px;background:#c5c5c5"></div>
<div style="position:absolute;left:18px;top:502px;width:1876px;height:24px;background:#f3f3f3"></div>
<div class="t" style="left:25px;top:507px;transform-origin:0 0;transform:scaleX(0.9257);">REST Client</div>
<svg style="left:0;top:0" width="1894" height="953"><circle cx="1854" cy="514" r="4.6" fill="#6e6e6e"/><circle cx="1854.00" cy="509.10" r="1.85" fill="#6e6e6e"/><circle cx="1858.24" cy="511.55" r="1.85" fill="#6e6e6e"/><circle cx="1858.24" cy="516.45" r="1.85" fill="#6e6e6e"/><circle cx="1854.00" cy="518.90" r="1.85" fill="#6e6e6e"/><circle cx="1849.76" cy="516.45" r="1.85" fill="#6e6e6e"/><circle cx="1849.76" cy="511.55" r="1.85" fill="#6e6e6e"/><circle cx="1854" cy="514" r="1.9" fill="#f3f3f3"/></svg>
<div style="position:absolute;left:1874px;top:513px;width:12px;height:2px;background:#6e6e6e"></div>
<div style="position:absolute;left:18px;top:526px;width:1876px;height:2px;background:#c6c6c6"></div>
<div style="position:absolute;left:46px;top:527px;width:1px;height:404px;background:#c9c9c9"></div>
<div style="position:absolute;left:46px;top:528px;width:1848px;height:28px;background:#f7f7f7;border:1px solid #c9c9c9;border-top:none"></div>
<div class="t" style="left:665px;top:534px;transform-origin:0 0;transform:scaleX(0.9880);">This REST Client is deprecated. Try our new HTTP Client in the editor.</div>
<div class="t" style="left:1074px;top:534px;transform-origin:0 0;transform:scaleX(1.0227);color:#2470c2">Convert request to the new format</div>
<svg style="left:27px;top:535px" width="11" height="13" viewBox="0 0 11 13"><path d="M0 0 L11 6.5 L0 13 Z" fill="#59a869"/></svg>
<svg style="left:26px;top:562px" width="13" height="13" viewBox="0 0 13 13"><path d="M1.4 5.6 A5.1 5.1 0 0 1 11.3 5.4 M11.1 8.4 A5.1 5.1 0 0 1 1.2 8.1" fill="none" stroke="#6e6e6e" stroke-width="1.6"/><path d="M0 1.2 V6.3 H4.8 Z M7.6 8.2 H12.6 V12.8 Z" fill="#6e6e6e"/></svg>
<svg style="left:25px;top:589px" width="13" height="10" viewBox="0 0 13 10"><path d="M1.5 5 H13 M6 0.8 L1.5 5 L6 9.2" fill="none" stroke="#6e6e6e" stroke-width="1.7"/></svg>
<svg style="left:25px;top:614px" width="13" height="13" viewBox="0 0 13 13"><path d="M1 5 V12 H8" fill="none" stroke="#6e6e6e" stroke-width="1.7"/><path d="M4 9 L11.5 1.5" stroke="#6e6e6e" stroke-width="1.7"/><path d="M6.5 0.5 H12.5 V6.5 Z" fill="#6e6e6e"/></svg>
<svg style="left:25px;top:640px" width="13" height="13" viewBox="0 0 13 13"><path d="M1 5 V12 H8" fill="none" stroke="#6e6e6e" stroke-width="1.7"/><path d="M4.5 8.5 L12 1" stroke="#6e6e6e" stroke-width="1.7"/><path d="M3.2 4 V9.8 H9 Z" fill="#6e6e6e"/></svg>
<svg style="left:25px;top:665px" width="14" height="15" viewBox="0 0 14 15"><circle cx="3.5" cy="3.5" r="2.6" fill="none" stroke="#9aa7b0" stroke-width="1.5"/><path d="M3.5 6 V11 M3.5 9 H5.5" stroke="#9aa7b0" stroke-width="1.5"/><circle cx="10" cy="8" r="2.6" fill="none" stroke="#36a9df" stroke-width="1.5"/><path d="M10 10.5 V14.5 M10 13 H12" stroke="#36a9df" stroke-width="1.5"/></svg>
<svg style="left:25px;top:691px" width="14" height="14" viewBox="0 0 14 14"><path d="M2 12 L8 6" stroke="#6e6e6e" stroke-width="3" stroke-linecap="round"/><path d="M6.5 4.5 A3.8 3.8 0 0 1 12.5 1 L10 3.5 L10.5 5.5 L12.5 6 L13.5 3.5 A3.8 3.8 0 0 1 8.5 8 Z" fill="#6e6e6e"/></svg>
<svg style="left:26px;top:719px" width="11" height="11" viewBox="0 0 11 11"><path d="M1 1 L10 10 M10 1 L1 10" stroke="#6e6e6e" stroke-width="1.7"/></svg>
<svg style="left:0px;top:0px" width="200" height="600" viewBox="0 0 200 600"><path d="M45 542 L59 532 L57.5 538.5 L133 535.3 L133 537.2 L61 545.5 L61.5 549.5 Z" fill="#f31f1f"/></svg>
<div class="t" style="left:46px;top:562px;transform-origin:0 0;transform:scaleX(0.9728);">HTTP method:</div>
<div style="position:absolute;left:138px;top:559px;width:97px;height:23px;background:#fff;border:1px solid #c4c4c4"></div>
<div class="t" style="left:143px;top:563px;transform-origin:0 0;transform:scaleX(0.8416);">GET</div>
<svg style="left:222px;top:567px" width="9" height="6" viewBox="0 0 9 6"><path d="M0.5 0.5 L4.5 4.5 L8.5 0.5" stroke="#555" stroke-width="1.1" fill="none"/></svg>
<div class="t" style="left:246px;top:562px;transform-origin:0 0;transform:scaleX(1.0469);">Host/port:</div>
<div style="position:absolute;left:316px;top:559px;width:336px;height:22px;background:#fff;border:1px solid #c4c4c4"></div>
<div class="t" style="left:321px;top:563px;transform-origin:0 0;transform:scaleX(1.0141);">http://localhost:8303</div>
<div style="position:absolute;left:657px;top:559px;width:1236px;height:22px;background:#fff;border:1px solid #c4c4c4"></div>
<div style="position:absolute;left:658px;top:560px;width:43px;height:20px;background:#f2f2f2;border-right:1px solid #c4c4c4"></div>
<div class="t" style="left:662px;top:563px;transform-origin:0 0;transform:scaleX(0.9058);">Path:</div>
<div class="t" style="left:705px;top:562px;transform-origin:0 0;transform:scaleX(1.0517);">/lang/current</div>
<div style="position:absolute;left:130px;top:556px;width:107px;height:28px;border:3px solid #f51c1c;border-radius:3px"></div>
<div style="position:absolute;left:307px;top:550px;width:160px;height:39px;border:3px solid #f51c1c;border-radius:3px"></div>
<div style="position:absolute;left:656px;top:557px;width:172px;height:26px;border:3px solid #f51c1c;border-radius:3px"></div>
<div style="position:absolute;left:47px;top:612px;width:1847px;height:4px;background:#fff"></div>
<div style="position:absolute;left:46px;top:585px;width:53px;height:31px;background:#fff;border:1px solid #b8b8b8;border-bottom:none"></div>
<div class="t" style="left:51.5px;top:592px;transform-origin:0 0;transform:scaleX(0.8529);color:#000">Request</div>
<div style="position:absolute;left:98px;top:585px;width:51px;height:28px;background:#d5d5d5;border:1px solid #b8b8b8"></div>
<div class="t" style="left:103.3px;top:592px;transform-origin:0 0;transform:scaleX(0.8665);color:#333">Cookies</div>
<div style="position:absolute;left:148px;top:585px;width:61px;height:28px;background:#d5d5d5;border:1px solid #b8b8b8"></div>
<div class="t" style="left:153.5px;top:592px;transform-origin:0 0;transform:scaleX(0.8386);color:#333">Response</div>
<div style="position:absolute;left:208px;top:585px;width:105px;height:28px;background:#d5d5d5;border:1px solid #b8b8b8"></div>
<div class="t" style="left:212.5px;top:592px;transform-origin:0 0;transform:scaleX(0.8572);color:#333">Response Headers</div>
<div style="position:absolute;left:47px;top:616px;width:1847px;height:1px;background:#a9a9a9"></div>
<div style="position:absolute;left:98px;top:612px;width:1796px;height:1px;background:#a9a9a9"></div>
<div class="t" style="left:53px;top:620px;transform-origin:0 0;transform:scaleX(0.8750);">Headers</div>
<div style="position:absolute;left:109px;top:627px;width:548px;height:1px;background:#d0d0d0"></div>
<div style="position:absolute;left:52px;top:644px;width:605px;height:282px;background:#fff;border:1px solid #bdbdbd"></div>
<div style="position:absolute;left:53px;top:645px;width:578px;height:19px;background:#f1f4f9"></div>
<div style="position:absolute;left:53px;top:683px;width:578px;height:19px;background:#2675bf"></div>
<div style="position:absolute;left:631px;top:645px;width:1px;height:280px;background:#bdbdbd"></div>
<div style="position:absolute;left:632px;top:645px;width:24px;height:280px;background:#f2f2f2"></div>
<div class="t" style="left:58px;top:649px;transform-origin:0 0;transform:scaleX(0.9225);font-family:'Liberation Mono',monospace;font-size:11px;">Accept: */*</div>
<div class="t" style="left:58px;top:668px;transform-origin:0 0;transform:scaleX(0.9155);font-family:'Liberation Mono',monospace;font-size:11px;">Cache-Control: no-cache</div>
<div class="t" style="left:58px;top:687px;transform-origin:0 0;transform:scaleX(0.9158);font-family:'Liberation Mono',monospace;font-size:11px;color:#fff">Accept-Language: en-US</div>
<svg style="left:638px;top:652px" width="12" height="12" viewBox="0 0 12 12"><path d="M6 0 V12 M0 6 H12" stroke="#6e6e6e" stroke-width="1.7"/></svg>
<div style="position:absolute;left:638px;top:683px;width:12px;height:2px;background:#6e6e6e"></div>
<div style="position:absolute;left:43px;top:680px;width:163px;height:28px;border:3px solid #f51c1c;border-radius:3px"></div>
<svg style="left:660px;top:768px" width="4" height="14" viewBox="0 0 4 14"><path d="M1 0 V14" stroke="#a8a8a8" stroke-dasharray="1 1"/><path d="M3 1 V14" stroke="#a8a8a8" stroke-dasharray="1 1"/></svg>
<div class="t" style="left:670px;top:620px;transform-origin:0 0;transform:scaleX(0.8638);">Request Parameters</div>
<div style="position:absolute;left:782px;top:627px;width:492px;height:1px;background:#d0d0d0"></div>
<div style="position:absolute;left:669px;top:644px;width:605px;height:282px;background:#fff;border:1px solid #bdbdbd"></div>
<div style="position:absolute;left:1248px;top:645px;width:1px;height:280px;background:#bdbdbd"></div>
<div style="position:absolute;left:1249px;top:645px;width:24px;height:280px;background:#f2f2f2"></div>
<div class="t" style="left:910px;top:734px;transform-origin:0 0;transform:scaleX(1.0297);color:#8c8c8c">Nothing to show</div>
<svg style="left:1255px;top:652px" width="12" height="12" viewBox="0 0 12 12"><path d="M6 0 V12 M0 6 H12" stroke="#6e6e6e" stroke-width="1.7"/></svg>
<div style="position:absolute;left:1255px;top:683px;width:12px;height:2px;background:#c0c0c0"></div>
<svg style="left:1255px;top:704px" width="12" height="12" viewBox="0 0 12 12"><circle cx="6" cy="6" r="5.5" fill="#6e6e6e"/><path d="M3.5 3.5 L8.5 8.5 M8.5 3.5 L3.5 8.5" stroke="#f2f2f2" stroke-width="1.4"/></svg>
<svg style="left:1277px;top:768px" width="4" height="14" viewBox="0 0 4 14"><path d="M1 0 V14" stroke="#a8a8a8" stroke-dasharray="1 1"/><path d="M3 1 V14" stroke="#a8a8a8" stroke-dasharray="1 1"/></svg>
<div class="t" style="left:1284px;top:620px;transform-origin:0 0;transform:scaleX(0.8816);">Request Body</div>
<div style="position:absolute;left:1362px;top:627px;width:528px;height:1px;background:#d0d0d0"></div>
<svg style="left:1284px;top:646px" width="14" height="14" viewBox="0 0 14 14"><circle cx="7" cy="7" r="6" fill="#fafafa" stroke="#c6c6c6"/><circle cx="7" cy="7" r="3.5" fill="#c0c0c0"/></svg>
<div class="t" style="left:1302px;top:646px;transform-origin:0 0;transform:scaleX(0.9771);color:#8c8c8c">Empty</div>
<svg style="left:1284px;top:676px" width="14" height="14" viewBox="0 0 14 14"><circle cx="7" cy="7" r="6" fill="#fafafa" stroke="#c6c6c6"/></svg>
<div class="t" style="left:1302px;top:676px;transform-origin:0 0;transform:scaleX(1.0066);color:#8c8c8c">Text</div>
<div style="position:absolute;left:1336px;top:672px;width:553px;height:22px;background:#ececec;border:1px solid #d0d0d0"></div>
<svg style="left:1284px;top:705px" width="14" height="14" viewBox="0 0 14 14"><circle cx="7" cy="7" r="6" fill="#fafafa" stroke="#c6c6c6"/></svg>
<div class="t" style="left:1302px;top:705px;transform-origin:0 0;transform:scaleX(0.9769);color:#8c8c8c">File contents</div>
<svg style="left:1284px;top:732px" width="14" height="14" viewBox="0 0 14 14"><circle cx="7" cy="7" r="6" fill="#fafafa" stroke="#c6c6c6"/></svg>
<div class="t" style="left:1302px;top:732px;transform-origin:0 0;transform:scaleX(1.0380);color:#8c8c8c">File upload (multipart/form-data)</div>
<div class="t" style="left:1309px;top:762px;transform-origin:0 0;transform:scaleX(0.9883);color:#8c8c8c">File to send:</div>
<div style="position:absolute;left:1389px;top:758px;width:500px;height:22px;background:#ececec;border:1px solid #d0d0d0"></div>
<svg style="left:1870px;top:677px" width="14" height="11" viewBox="0 0 14 11"><path d="M0 1 H5 L6 2.5 H12 V4 H3 L0 10 Z" fill="#a0a0a0"/><path d="M3 5 H14 L11 11 H0 Z" fill="#a0a0a0"/></svg>
<svg style="left:1870px;top:763px" width="14" height="11" viewBox="0 0 14 11"><path d="M0 1 H5 L6 2.5 H12 V4 H3 L0 10 Z" fill="#a0a0a0"/><path d="M3 5 H14 L11 11 H0 Z" fill="#a0a0a0"/></svg>
<div style="position:absolute;left:0px;top:931px;width:1894px;height:1px;background:#c4c4c4"></div>
<div style="position:absolute;left:17px;top:932px;width:97px;height:21px;background:#c7c7c7"></div>
<svg style="left:29px;top:936px" width="16" height="15" viewBox="0 0 16 15"><circle cx="9" cy="6" r="5" fill="#f6d9a7"/><path d="M4 5 Q9 -1 14 5" fill="#a0652c"/><circle cx="5" cy="11" r="3.5" fill="#2a64b8"/><circle cx="5" cy="11" r="2" fill="#f1c40f"/></svg>
<div class="t" style="left:46px;top:936px;transform-origin:0 0;transform:scaleX(0.8065);">REST Client</div>
<div class="t" style="left:142px;top:936px;transform-origin:0 0;transform:scaleX(0.8812);">SonarQube</div>
<div class="t" style="left:241.6px;top:936px;transform-origin:0 0;transform:scaleX(0.8999);"><u>9</u>: Version Control</div>
<div class="t" style="left:376px;top:936px;transform-origin:0 0;transform:scaleX(0.8912);">SonarLint</div>
<div class="t" style="left:463.8px;top:936px;transform-origin:0 0;transform:scaleX(0.9048);">Spring</div>
<div class="t" style="left:535px;top:936px;transform-origin:0 0;transform:scaleX(0.8997);">Terminal</div>
<div class="t" style="left:618.8px;top:936px;transform-origin:0 0;transform:scaleX(0.8524);">Java Enterprise</div>
<div class="t" style="left:735.7px;top:936px;transform-origin:0 0;transform:scaleX(0.8905);"><u>5</u>: Debug</div>
<div class="t" style="left:820.8px;top:936px;transform-origin:0 0;transform:scaleX(0.8439);"><u>6</u>: TODO</div>
<div class="t" style="left:904px;top:936px;transform-origin:0 0;transform:scaleX(0.8505);"><u>0</u>: Messages</div>
<svg style="left:125px;top:936px" width="14" height="14" viewBox="0 0 14 14"><path d="M1 2 Q9 3 13 13 M3 5 Q8 6 10 13 M1 8 Q5 9 7 13" stroke="#3fa2dc" stroke-width="1.2" fill="none"/></svg>
<svg style="left:226px;top:936px" width="12" height="14" viewBox="0 0 12 14"><path d="M2 1 V13 M2 6 Q9 6 9 2 M6 4 L9 1 L12 4" stroke="#6e6e6e" stroke-width="1.4" fill="none"/></svg>
<svg style="left:358px;top:936px" width="14" height="14" viewBox="0 0 14 14"><circle cx="7" cy="7" r="6" fill="none" stroke="#e23c3c" stroke-width="1.5"/><path d="M3 7 H11" stroke="#e23c3c" stroke-width="1.5"/></svg>
<svg style="left:447px;top:937px" width="14" height="12" viewBox="0 0 14 12"><path d="M1 11 Q1 2 13 1 Q13 10 4 10 Z" fill="#7a7a7a"/></svg>
<svg style="left:518px;top:937px" width="12" height="11" viewBox="0 0 12 11"><rect x="0" y="0" width="12" height="11" fill="#6e6e6e"/><path d="M2 3 L4.5 5 L2 7" stroke="#fff" stroke-width="1" fill="none"/></svg>
<svg style="left:603px;top:937px" width="13" height="13" viewBox="0 0 13 13"><rect x="0" y="0" width="11" height="11" fill="none" stroke="#6e6e6e" stroke-width="1.4"/><rect x="5" y="5" width="8" height="8" fill="#6e6e6e"/></svg>
<svg style="left:719px;top:936px" width="14" height="14" viewBox="0 0 14 14"><ellipse cx="7" cy="8" rx="5" ry="6" fill="#6e6e6e"/><circle cx="11" cy="12" r="2.3" fill="#38b34a"/></svg>
<svg style="left:806px;top:937px" width="12" height="12" viewBox="0 0 12 12"><path d="M0 1.5 H2 M4 1.5 H12 M0 5.5 H2 M4 5.5 H12 M0 9.5 H2 M4 9.5 H12" stroke="#6e6e6e" stroke-width="1.4"/></svg>
<svg style="left:888px;top:937px" width="12" height="12" viewBox="0 0 12 12"><path d="M0 1.5 H12 M0 5.5 H8 M0 9.5 H10" stroke="#6e6e6e" stroke-width="1.6"/></svg>
<svg style="left:1815px;top:937px" width="13" height="13" viewBox="0 0 13 13"><path d="M6.5 0 A6.5 6.5 0 1 0 6.5 13 H13 V6.5 A6.5 6.5 0 0 0 6.5 0 Z" fill="#59a869"/><text x="3.5" y="10.5" font-size="10" fill="#fff" font-family="Liberation Sans" font-weight="bold">2</text></svg>
<div class="t" style="left:1832.7px;top:936px;transform-origin:0 0;transform:scaleX(0.8660);">Event Log</div>
</body></html>
